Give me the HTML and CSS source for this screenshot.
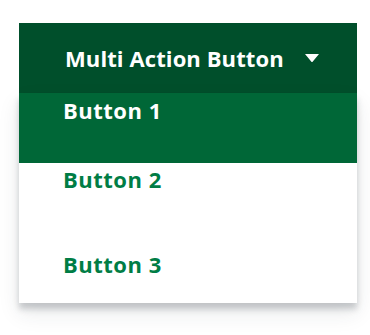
FILE: index.html
```html
<!DOCTYPE html>
<html lang="en">
<head>
  <meta charset="UTF-8">
  <title>Multi Action Button</title>
  <link rel="stylesheet" href="styles.css">
</head>
<body>
<div class="multi-action">
  <button class="multi-action-toggle">
    <span class="label">Multi Action Button</span>
    <svg class="caret" width="14" height="8" viewBox="0 0 14 8"><path d="M0 0h14L7.8 7.4a1 1 0 0 1-1.6 0z" fill="#fff"/></svg>
  </button>
  <ul class="multi-action-menu">
    <li class="menu-item active">Button 1</li>
    <li class="menu-item">Button 2</li>
    <li class="menu-item last">Button 3</li>
  </ul>
</div>
</body>
</html>
```

FILE: styles.css
```css
* {
    box-sizing: border-box;
    margin: 0;
    padding: 0;
}

body {
    font-family: "Open Sans", "Noto Sans", sans-serif;
    background: #fff;
    padding: 23px 13px 32px 19px;
}

.multi-action {
    width: 338px;
}

.multi-action-toggle {
    width: 100%;
    height: 70px;
    display: flex;
    align-items: center;
    justify-content: space-between;
    padding: 0 38px 0 46px;
    border: none;
    background: #004f2b;
    color: #fff;
    font-family: inherit;
    font-size: 22px;
    font-weight: 700;
    letter-spacing: 0.1px;
    line-height: 24px;
}

.multi-action-menu {
    list-style: none;
    background: #fff;
    padding-bottom: 27px;
    box-shadow: 0 6px 6px rgba(40, 50, 60, 0.22), 0 10px 20px rgba(40, 50, 60, 0.1);
}

.menu-item {
    padding: 4px 44px 0;
    font-size: 22px;
    font-weight: 700;
    letter-spacing: 0.5px;
    line-height: 24px;
    color: #007d45;
}

.menu-item.active {
    height: 70px;
    padding-top: 5px;
    background: #006737;
    color: #fff;
}

.menu-item.last {
    margin-top: 57px;
}
```
